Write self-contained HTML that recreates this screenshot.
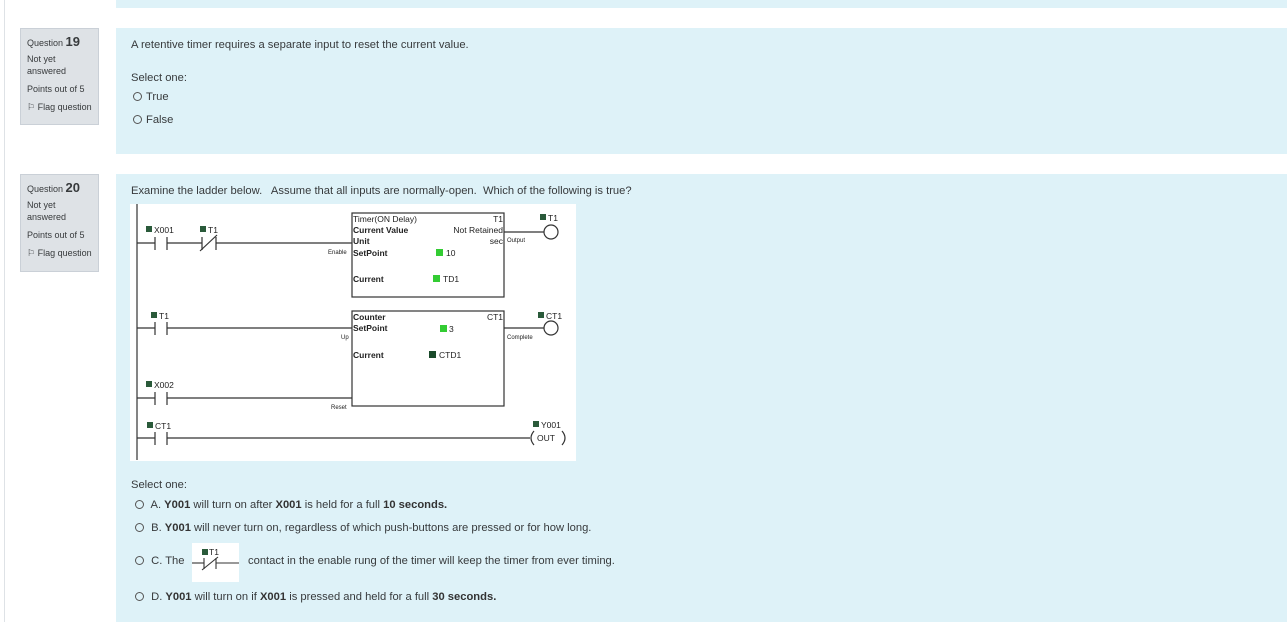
<!DOCTYPE html>
<html><head><meta charset="utf-8"><style>
body{margin:0;width:1287px;height:622px;background:#fff;position:relative;overflow:hidden;font-family:"Liberation Sans",sans-serif;color:#373a3c}
.a{position:absolute}
.info{background:#dee2e6;border:1px solid #cad0d7;box-sizing:border-box;width:79px;font-size:9px;color:#373a3c;padding:6px 6px}
.content{background:#def2f8}
.t{position:absolute;font-size:11.2px;white-space:nowrap}
.r{display:inline-block;width:9px;height:9px;border:1px solid #555;border-radius:50%;vertical-align:-1px;margin-right:4px;box-sizing:border-box}
b{color:#333}
</style></head><body>
<div class="a" style="left:4px;top:0;width:1px;height:622px;background:#dee2e6"></div>
<div class="a content" style="left:116px;top:0;width:1171px;height:8px"></div>

<div class="a info" style="left:20px;top:28px;height:97px">
<div style="line-height:13px">Question <span style="font-size:13px;font-weight:bold">19</span></div>
<div style="margin-top:3px;line-height:12px">Not yet<br>answered</div>
<div style="margin-top:7px">Points out of 5</div>
<div style="margin-top:8px">⚐ Flag question</div>
</div>
<div class="a content" style="left:116px;top:28px;width:1171px;height:126px"></div>
<div class="t" style="left:131px;top:39px">A retentive timer requires a separate input to reset the current value.</div>
<div class="t" style="left:131px;top:72px">Select one:</div>
<div class="t" style="left:133px;top:91px"><span class="r"></span>True</div>
<div class="t" style="left:133px;top:114px"><span class="r"></span>False</div>

<div class="a info" style="left:20px;top:174px;height:98px">
<div style="line-height:13px">Question <span style="font-size:13px;font-weight:bold">20</span></div>
<div style="margin-top:3px;line-height:12px">Not yet<br>answered</div>
<div style="margin-top:7px">Points out of 5</div>
<div style="margin-top:8px">⚐ Flag question</div>
</div>
<div class="a content" style="left:116px;top:174px;width:1171px;height:448px"></div>
<div class="t" style="left:131px;top:185px">Examine the ladder below.&nbsp;&nbsp; Assume that all inputs are normally-open.&nbsp; Which of the following is true?</div>

<svg class="a" style="left:130px;top:204px" width="446" height="257" viewBox="130 204 446 257" font-family="Liberation Sans,sans-serif" font-size="8.5">
<rect x="130" y="204" width="446" height="257" fill="#fff"/>
<g stroke="#333" stroke-width="1.2" fill="none">
<line x1="137" y1="204" x2="137" y2="460"/>
<line x1="137" y1="243" x2="155" y2="243"/><line x1="155" y1="237" x2="155" y2="250"/><line x1="167" y1="237" x2="167" y2="250"/>
<line x1="167" y1="243" x2="202" y2="243"/><line x1="202" y1="237" x2="202" y2="250"/><line x1="216" y1="237" x2="216" y2="250"/><line x1="200" y1="251" x2="217" y2="235"/>
<line x1="216" y1="243" x2="352" y2="243"/>
<rect x="352" y="213" width="152" height="84"/>
<line x1="504" y1="232" x2="544" y2="232"/><circle cx="551" cy="232" r="7"/>
<line x1="137" y1="328" x2="155" y2="328"/><line x1="155" y1="322" x2="155" y2="335"/><line x1="167" y1="322" x2="167" y2="335"/><line x1="167" y1="328" x2="352" y2="328"/>
<rect x="352" y="311" width="152" height="95"/>
<line x1="504" y1="328" x2="544" y2="328"/><circle cx="551" cy="328" r="7"/>
<line x1="137" y1="398" x2="155" y2="398"/><line x1="155" y1="392" x2="155" y2="405"/><line x1="167" y1="392" x2="167" y2="405"/><line x1="167" y1="398" x2="352" y2="398"/>
<line x1="137" y1="438" x2="155" y2="438"/><line x1="155" y1="432" x2="155" y2="445"/><line x1="167" y1="432" x2="167" y2="445"/><line x1="167" y1="438" x2="530" y2="438"/>
<path d="M534 431 Q528 438 534 445"/><path d="M562 431 Q568 438 562 445"/>
</g>
<g fill="#2a5a3a"><rect x="146" y="226" width="6" height="6"/><rect x="200" y="226" width="6" height="6"/><rect x="540" y="214" width="6" height="6"/><rect x="151" y="312" width="6" height="6"/><rect x="538" y="312" width="6" height="6"/><rect x="146" y="381" width="6" height="6"/><rect x="147" y="422" width="6" height="6"/><rect x="533" y="421" width="6" height="6"/></g>
<g fill="#3c3"><rect x="436" y="249" width="7" height="7"/><rect x="433" y="275" width="7" height="7"/><rect x="440" y="325" width="7" height="7"/></g>
<rect x="429" y="351" width="7" height="7" fill="#1a4a2a"/>
<g fill="#222">
<text x="154" y="233">X001</text><text x="208" y="233">T1</text><text x="548" y="221">T1</text>
<text x="353" y="222">Timer(ON Delay)</text><text x="503" y="222" text-anchor="end">T1</text>
<text x="353" y="233" font-weight="bold">Current Value</text><text x="503" y="233" text-anchor="end">Not Retained</text>
<text x="353" y="244" font-weight="bold">Unit</text><text x="503" y="244" text-anchor="end">sec</text>
<text x="353" y="256" font-weight="bold">SetPoint</text><text x="446" y="256">10</text>
<text x="353" y="282" font-weight="bold">Current</text><text x="443" y="282">TD1</text>
<text x="328" y="254" font-size="6">Enable</text><text x="507" y="242" font-size="6">Output</text>
<text x="159" y="319">T1</text><text x="546" y="319">CT1</text>
<text x="353" y="320" font-weight="bold">Counter</text><text x="503" y="320" text-anchor="end">CT1</text>
<text x="353" y="331" font-weight="bold">SetPoint</text><text x="449" y="332">3</text>
<text x="353" y="358" font-weight="bold">Current</text><text x="439" y="358">CTD1</text>
<text x="341" y="339" font-size="6">Up</text><text x="507" y="339" font-size="6">Complete</text>
<text x="154" y="388">X002</text><text x="331" y="409" font-size="6">Reset</text>
<text x="155" y="429">CT1</text><text x="541" y="428">Y001</text><text x="537" y="441">OUT</text>
</g>
</svg>

<div class="t" style="left:131px;top:479px">Select one:</div>
<div class="t" style="left:135px;top:499px"><span class="r"></span> A. <b>Y001</b> will turn on after <b>X001</b> is held for a full <b>10 seconds.</b></div>
<div class="t" style="left:135px;top:522px"><span class="r"></span> B. <b>Y001</b> will never turn on, regardless of which push-buttons are pressed or for how long.</div>
<div class="t" style="left:135px;top:555px"><span class="r"></span> C. The</div>
<svg class="a" style="left:192px;top:543px" width="47" height="39" font-family="Liberation Sans,sans-serif" font-size="8.5">
<rect width="47" height="39" fill="#fff"/>
<rect x="10" y="6" width="6" height="6" fill="#2a5a3a"/><text x="17" y="12" fill="#222">T1</text>
<g stroke="#333" stroke-width="1.1"><line x1="0" y1="20" x2="12" y2="20"/><line x1="12" y1="15" x2="12" y2="26"/><line x1="24" y1="15" x2="24" y2="26"/><line x1="10" y1="27" x2="26" y2="14"/><line x1="24" y1="20" x2="47" y2="20"/></g>
</svg>
<div class="t" style="left:248px;top:555px">contact in the enable rung of the timer will keep the timer from ever timing.</div>
<div class="t" style="left:135px;top:591px"><span class="r"></span> D. <b>Y001</b> will turn on if <b>X001</b> is pressed and held for a full <b>30 seconds.</b></div>
</body></html>
